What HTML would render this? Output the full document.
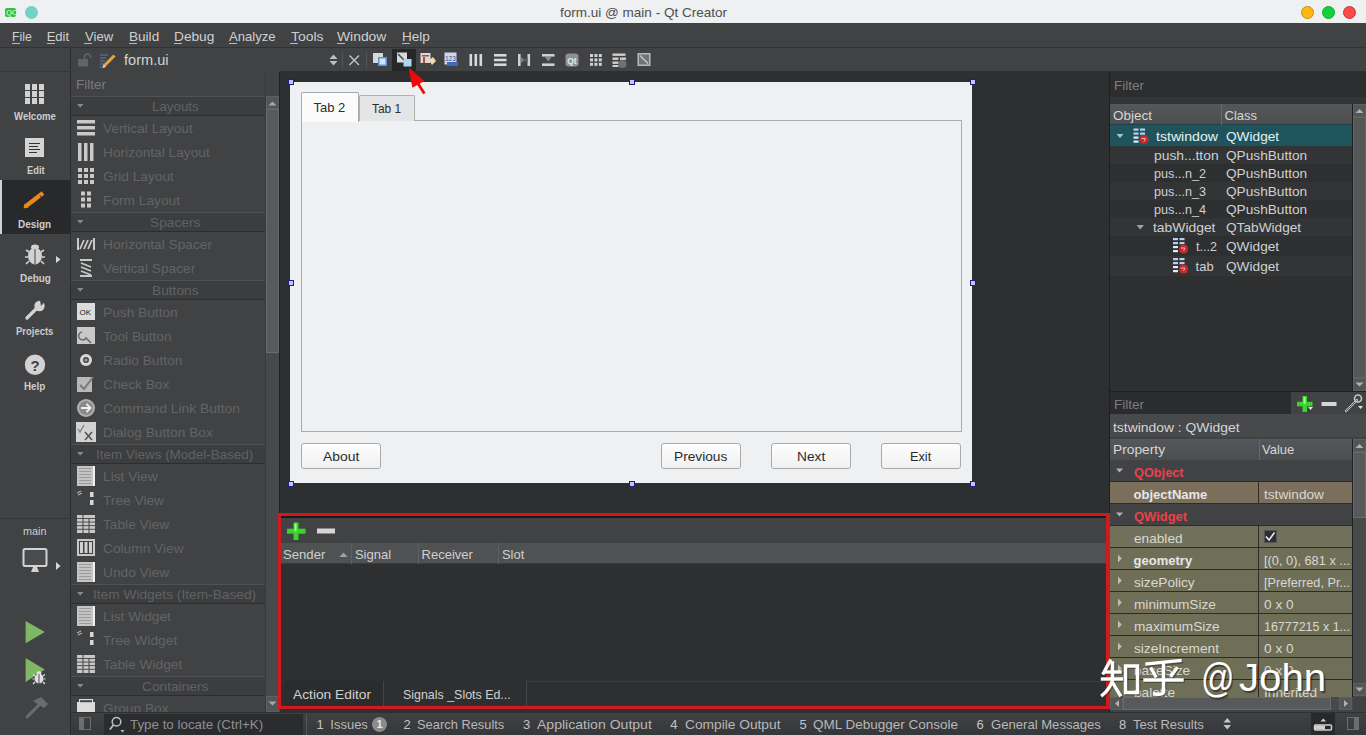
<!DOCTYPE html>
<html><head><meta charset="utf-8">
<style>
*{margin:0;padding:0;box-sizing:border-box}
html,body{width:1366px;height:735px;overflow:hidden;background:#404244;font-family:"Liberation Sans",sans-serif;position:relative}
.a{position:absolute}
.t{position:absolute;white-space:nowrap}
svg{position:absolute;overflow:visible}
</style></head><body>

<div class="a" style="left:0px;top:0px;width:1366px;height:23px;background:#eff0f1;"></div>
<div class="t" style="left:560.00px;top:6px;font-size:13px;line-height:13px;color:#4c4e50;transform:scaleX(1.0402);transform-origin:0 0;">form.ui @ main - Qt Creator</div>
<div class="a" style="left:5px;top:8px;width:11px;height:9px;background:#3fb83f;border-radius:2px"></div>
<div class="t" style="left:6px;top:8px;font-size:8px;line-height:9px;color:#9dff9d;font-weight:bold;letter-spacing:-0.5px">QC</div>
<div class="a" style="left:25px;top:6px;width:13px;height:13px;background:#6fd3c8;border-radius:50%"></div>
<div class="a" style="left:1301.0px;top:5.5px;width:13px;height:13px;background:#fdb813;border-radius:50%;border:1px solid #c98e0c"></div>
<div class="a" style="left:1322.0px;top:5.5px;width:13px;height:13px;background:#13d13a;border-radius:50%;border:1px solid #10a82e"></div>
<div class="a" style="left:1343.0px;top:5.5px;width:13px;height:13px;background:#fc4a4a;border-radius:50%;border:1px solid #c23434"></div>
<div class="a" style="left:0px;top:23px;width:1366px;height:24px;background:#404244;"></div>
<div class="a" style="left:0px;top:47px;width:1366px;height:1px;background:#313233;"></div>
<div class="t" style="left:11.60px;top:30px;font-size:13px;line-height:13px;color:#d0d0d0;transform:scaleX(0.9460);transform-origin:0 0;">File</div>
<div class="a" style="left:12px;top:43px;width:8px;height:1px;background:#b8b8b8;"></div>
<div class="t" style="left:46.70px;top:30px;font-size:13px;line-height:13px;color:#d0d0d0;">Edit</div>
<div class="a" style="left:47px;top:43px;width:8px;height:1px;background:#b8b8b8;"></div>
<div class="t" style="left:84.50px;top:30px;font-size:13px;line-height:13px;color:#d0d0d0;transform:scaleX(1.0089);transform-origin:0 0;">View</div>
<div class="a" style="left:84px;top:43px;width:8px;height:1px;background:#b8b8b8;"></div>
<div class="t" style="left:128.80px;top:30px;font-size:13px;line-height:13px;color:#d0d0d0;transform:scaleX(1.0441);transform-origin:0 0;">Build</div>
<div class="a" style="left:129px;top:43px;width:8px;height:1px;background:#b8b8b8;"></div>
<div class="t" style="left:174.40px;top:30px;font-size:13px;line-height:13px;color:#d0d0d0;transform:scaleX(1.0526);transform-origin:0 0;">Debug</div>
<div class="a" style="left:174px;top:43px;width:8px;height:1px;background:#b8b8b8;"></div>
<div class="t" style="left:229.40px;top:30px;font-size:13px;line-height:13px;color:#d0d0d0;transform:scaleX(1.0069);transform-origin:0 0;">Analyze</div>
<div class="a" style="left:229px;top:43px;width:8px;height:1px;background:#b8b8b8;"></div>
<div class="t" style="left:290.50px;top:30px;font-size:13px;line-height:13px;color:#d0d0d0;transform:scaleX(1.0707);transform-origin:0 0;">Tools</div>
<div class="a" style="left:290px;top:43px;width:8px;height:1px;background:#b8b8b8;"></div>
<div class="t" style="left:337.40px;top:30px;font-size:13px;line-height:13px;color:#d0d0d0;transform:scaleX(1.0674);transform-origin:0 0;">Window</div>
<div class="a" style="left:337px;top:43px;width:8px;height:1px;background:#b8b8b8;"></div>
<div class="t" style="left:402.40px;top:30px;font-size:13px;line-height:13px;color:#d0d0d0;transform:scaleX(1.0406);transform-origin:0 0;">Help</div>
<div class="a" style="left:402px;top:43px;width:8px;height:1px;background:#b8b8b8;"></div>
<div class="a" style="left:0px;top:48px;width:70px;height:687px;background:#404244;"></div>
<div class="a" style="left:70px;top:48px;width:1px;height:687px;background:#2b2c2d;"></div>
<div class="a" style="left:0px;top:71px;width:70px;height:1px;background:#353637;"></div>
<div class="a" style="left:0px;top:518px;width:70px;height:1px;background:#353637;"></div>
<div class="a" style="left:24.7px;top:84px;width:5.5px;height:5.5px;background:#d2d2d2;"></div>
<div class="a" style="left:24.7px;top:91px;width:5.5px;height:5.5px;background:#d2d2d2;"></div>
<div class="a" style="left:24.7px;top:98px;width:5.5px;height:5.5px;background:#d2d2d2;"></div>
<div class="a" style="left:31.7px;top:84px;width:5.5px;height:5.5px;background:#d2d2d2;"></div>
<div class="a" style="left:31.7px;top:91px;width:5.5px;height:5.5px;background:#d2d2d2;"></div>
<div class="a" style="left:31.7px;top:98px;width:5.5px;height:5.5px;background:#d2d2d2;"></div>
<div class="a" style="left:38.7px;top:84px;width:5.5px;height:5.5px;background:#d2d2d2;"></div>
<div class="a" style="left:38.7px;top:91px;width:5.5px;height:5.5px;background:#d2d2d2;"></div>
<div class="a" style="left:38.7px;top:98px;width:5.5px;height:5.5px;background:#d2d2d2;"></div>
<div class="t" style="left:14.20px;top:111px;font-size:11px;line-height:11px;color:#cdcdcd;font-weight:bold;transform:scaleX(0.8716);transform-origin:0 0;">Welcome</div>
<div class="a" style="left:25px;top:138px;width:19px;height:19px;background:#d4d4d4;"></div>
<div class="a" style="left:29px;top:142.5px;width:11px;height:1.3px;background:#333;"></div>
<div class="a" style="left:29px;top:145.5px;width:9px;height:1.3px;background:#333;"></div>
<div class="a" style="left:29px;top:148.5px;width:11px;height:1.3px;background:#333;"></div>
<div class="a" style="left:29px;top:151.5px;width:8px;height:1.3px;background:#333;"></div>
<div class="t" style="left:26.60px;top:164.6px;font-size:11px;line-height:11px;color:#cdcdcd;font-weight:bold;transform:scaleX(0.8466);transform-origin:0 0;">Edit</div>
<div class="a" style="left:2px;top:180px;width:68px;height:54px;background:#27292a;"></div>
<div class="a" style="left:0px;top:180px;width:2px;height:54px;background:#d0d0d0;"></div>
<svg style="left:0;top:0" width="70" height="240"><line x1="26" y1="206" x2="43" y2="193" stroke="#e88a1c" stroke-width="4.2" stroke-linecap="butt"/><polygon points="23.5,208.5 24.5,203.5 28.5,207.5" fill="#e88a1c"/><line x1="40" y1="195.5" x2="42" y2="198" stroke="#27292a" stroke-width="1"/></svg>
<div class="t" style="left:18.30px;top:218.6px;font-size:11px;line-height:11px;color:#cdcdcd;font-weight:bold;transform:scaleX(0.9023);transform-origin:0 0;">Design</div>
<svg style="left:0;top:0" width="70" height="400"><ellipse cx="35" cy="256" rx="7" ry="8.5" fill="#d2d2d2"/><ellipse cx="35" cy="247" rx="4" ry="2.5" fill="#d2d2d2"/><line x1="35" y1="249" x2="35" y2="264" stroke="#404244" stroke-width="1"/><path d="M26 250 L29 252 M44 250 L41 252 M25 257 L28 257 M45 257 L42 257 M26 264 L29 261 M44 264 L41 261" stroke="#d2d2d2" stroke-width="1.6"/><polygon points="56,256 60.5,259.5 56,263" fill="#d8d8d8"/><path d="M27 318 L37 308" stroke="#d2d2d2" stroke-width="3.4" stroke-linecap="round"/><circle cx="39.5" cy="306" r="5.2" fill="#d2d2d2"/><path d="M40 300 L46 300 L41 306 Z" fill="#404244"/><circle cx="35" cy="364.8" r="10.2" fill="#d2d2d2"/></svg>
<div class="t" style="left:19.80px;top:272.7px;font-size:11px;line-height:11px;color:#cdcdcd;font-weight:bold;transform:scaleX(0.9032);transform-origin:0 0;">Debug</div>
<div class="t" style="left:16.40px;top:326.4px;font-size:11px;line-height:11px;color:#cdcdcd;font-weight:bold;transform:scaleX(0.8595);transform-origin:0 0;">Projects</div>
<div class="t" style="left:30.50px;top:357.5px;font-size:15px;line-height:15px;color:#404244;font-weight:bold;">?</div>
<div class="t" style="left:24.40px;top:380.5px;font-size:11px;line-height:11px;color:#cdcdcd;font-weight:bold;transform:scaleX(0.8944);transform-origin:0 0;">Help</div>
<div class="t" style="left:23.00px;top:526.2px;font-size:11px;line-height:11px;color:#d0d0d0;transform:scaleX(0.9803);transform-origin:0 0;">main</div>
<svg style="left:0;top:0" width="70" height="735"><rect x="23.5" y="549" width="23" height="17" rx="1.5" fill="#4a4b4d" stroke="#d2d2d2" stroke-width="2"/><polygon points="31,572 39,572 36.5,566 33.5,566" fill="#d2d2d2"/><polygon points="56,562 60.5,566 56,570" fill="#d8d8d8"/><polygon points="25.6,621 44.8,632 25.6,643.2" fill="#80b765"/><polygon points="25.6,658 44.8,669.5 25.6,682" fill="#80b765"/><ellipse cx="39" cy="678.5" rx="4.8" ry="5.3" fill="#e0e0e0" stroke="#404244" stroke-width="0.8"/><ellipse cx="39" cy="672.8" rx="2.6" ry="1.6" fill="#e0e0e0"/><line x1="39" y1="674" x2="39" y2="684" stroke="#404244" stroke-width="0.9"/><path d="M33 674.5 L35 676 M45 674.5 L43 676 M32.5 679 L34.5 679 M45.5 679 L43.5 679 M33 684 L35 682 M45 684 L43 682" stroke="#e0e0e0" stroke-width="1.1"/><path d="M27 717 L40 704" stroke="#6b6c6e" stroke-width="3" stroke-linecap="round"/><path d="M33 701 L41 697 L48 704 L44 708 Z" fill="#6b6c6e"/></svg>
<div class="a" style="left:71px;top:48px;width:1295px;height:24px;background:#404244;"></div>
<div class="a" style="left:279px;top:71px;width:1087px;height:1px;background:#2f3031;"></div>
<svg style="left:0;top:0" width="140" height="72"><rect x="78" y="59" width="10" height="7.5" fill="#626365"/><path d="M84.5 59 L84.5 56 A3.2 3.2 0 0 1 90.5 56 L90.5 58" stroke="#626365" stroke-width="1.6" fill="none"/><path d="M100 55 H108 M100 58 H106 M100 61 H105 M100 64 H104 M100 67 H104" stroke="#5a7fa8" stroke-width="1.2"/><line x1="104" y1="66" x2="114.5" y2="55.5" stroke="#e8a23a" stroke-width="3"/><polygon points="102.5,68 103.5,64.5 106,67" fill="#f2d29a"/></svg>
<div class="t" style="left:124.00px;top:53px;font-size:14px;line-height:14px;color:#d4d4d4;transform:scaleX(1.0428);transform-origin:0 0;">form.ui</div>
<svg style="left:0;top:0" width="700" height="72"><polygon points="329.5,59 333.5,54.5 337.5,59" fill="#bdbdbd"/><polygon points="329.5,61 333.5,65.5 337.5,61" fill="#bdbdbd"/><line x1="342.5" y1="52" x2="342.5" y2="68" stroke="#555759" stroke-width="1"/><path d="M349.5 55.5 L359 65 M359 55.5 L349.5 65" stroke="#c8c8c8" stroke-width="1.3"/><line x1="366.5" y1="52" x2="366.5" y2="68" stroke="#555759" stroke-width="1"/></svg>
<div class="a" style="left:392px;top:49px;width:24px;height:22px;background:#262728;"></div>
<svg style="left:0;top:0" width="700" height="72"><rect x="373" y="53" width="10" height="10" fill="#d8d8d8"/><rect x="378" y="57" width="9" height="9" fill="#5d8fd6"/><rect x="379.5" y="58.5" width="6" height="6" fill="#cfe3ff"/><rect x="397" y="52.5" width="10" height="10" fill="#d8d8d8"/><line x1="398" y1="54" x2="406" y2="62" stroke="#3a4a5a" stroke-width="1.6"/><rect x="403.5" y="59" width="8" height="7.5" fill="#a9d6ef"/><rect x="420.5" y="53" width="10" height="10" fill="#d8d8d8"/><rect x="422" y="55" width="7" height="1.5" fill="#b84a3a"/><polygon points="429,60 433,57 436,61 432,65" fill="#f8d8b0"/><rect x="423" y="57" width="2" height="6" fill="#b84a3a"/><rect x="444.5" y="52.5" width="12" height="12" fill="#d0d8e8"/><text x="445" y="61" font-size="6.5" fill="#3050a0" font-family="Liberation Sans">123</text><rect x="447" y="62" width="11" height="4" fill="#3c6ac0"/><rect x="469.5" y="54" width="2.6" height="12" fill="#d8d8d8"/><rect x="474.5" y="54" width="2.6" height="12" fill="#d8d8d8"/><rect x="479.5" y="54" width="2.6" height="12" fill="#d8d8d8"/><rect x="494" y="54" width="12.5" height="2.6" fill="#d8d8d8"/><rect x="494" y="58.7" width="12.5" height="2.6" fill="#d8d8d8"/><rect x="494" y="63.4" width="12.5" height="2.6" fill="#d8d8d8"/><rect x="518" y="54" width="2.6" height="12" fill="#cfcfcf"/><rect x="527.5" y="54" width="2.6" height="12" fill="#cfcfcf"/><polygon points="521,57 525.5,60 521,63" fill="#7a7a7a"/><polygon points="527.5,57 523,60 527.5,63" fill="#5a5a5a"/><rect x="542" y="54" width="12.5" height="2.6" fill="#cfcfcf"/><rect x="542" y="63.4" width="12.5" height="2.6" fill="#cfcfcf"/><polygon points="545,57 551.5,57 548.2,61.5" fill="#8a8a8a"/><rect x="565.5" y="53.5" width="13" height="13" rx="3" fill="#8f9092"/><text x="567.2" y="63.5" font-size="8.5" fill="#e8e8e8" font-family="Liberation Sans" font-weight="bold">Qt</text><rect x="590.0" y="54.0" width="3" height="3" fill="#d0d0d0"/><rect x="590.0" y="58.4" width="3" height="3" fill="#d0d0d0"/><rect x="590.0" y="62.8" width="3" height="3" fill="#d0d0d0"/><rect x="594.4" y="54.0" width="3" height="3" fill="#d0d0d0"/><rect x="594.4" y="58.4" width="3" height="3" fill="#d0d0d0"/><rect x="594.4" y="62.8" width="3" height="3" fill="#d0d0d0"/><rect x="598.8" y="54.0" width="3" height="3" fill="#d0d0d0"/><rect x="598.8" y="58.4" width="3" height="3" fill="#d0d0d0"/><rect x="598.8" y="62.8" width="3" height="3" fill="#d0d0d0"/><rect x="612.5" y="53.5" width="13" height="2.4" fill="#cfcfcf"/><rect x="612.5" y="57.5" width="6" height="2.4" fill="#cfcfcf"/><rect x="620" y="57.5" width="6" height="2.4" fill="#cfcfcf"/><rect x="612.5" y="61.5" width="6" height="2.4" fill="#cfcfcf"/><rect x="612.5" y="65" width="6" height="2" fill="#cfcfcf"/><circle cx="622.5" cy="64" r="4" fill="#707070"/><rect x="637.5" y="53" width="13" height="13" fill="#b8b8b8"/><rect x="639" y="54.5" width="10" height="10" fill="#707274"/><line x1="640" y1="55.5" x2="648" y2="63.5" stroke="#c8c8c8" stroke-width="1.4"/></svg>
<div class="a" style="left:71px;top:72px;width:195px;height:640px;background:#404244;"></div>
<div class="t" style="left:75.50px;top:78px;font-size:13px;line-height:13px;color:#7a7b7d;transform:scaleX(1.0395);transform-origin:0 0;">Filter</div>
<div class="a" style="left:71px;top:96px;width:194px;height:20px;background:#3c3d3f;"></div>
<div class="a" style="left:71px;top:96px;width:194px;height:1px;background:#505254;"></div>
<div class="a" style="left:71px;top:115px;width:194px;height:1px;background:#2c2d2e;"></div>
<svg style="left:0;top:0" width="100" height="720"><polygon points="77,104 83.5,104 80.2,107.5" fill="#8a8b8d"/></svg>
<div class="t" style="left:151.65px;top:100px;font-size:13px;line-height:13px;color:#616264;transform:scaleX(1.0249);transform-origin:0 0;">Layouts</div>
<div class="t" style="left:103.30px;top:122px;font-size:13px;line-height:13px;color:#636466;transform:scaleX(1.0518);transform-origin:0 0;">Vertical Layout</div>
<div class="t" style="left:103.30px;top:146px;font-size:13px;line-height:13px;color:#636466;transform:scaleX(1.0550);transform-origin:0 0;">Horizontal Layout</div>
<div class="t" style="left:103.30px;top:170px;font-size:13px;line-height:13px;color:#636466;transform:scaleX(1.0550);transform-origin:0 0;">Grid Layout</div>
<div class="t" style="left:103.30px;top:194px;font-size:13px;line-height:13px;color:#636466;transform:scaleX(1.0550);transform-origin:0 0;">Form Layout</div>
<div class="a" style="left:71px;top:212px;width:194px;height:20px;background:#3c3d3f;"></div>
<div class="a" style="left:71px;top:212px;width:194px;height:1px;background:#505254;"></div>
<div class="a" style="left:71px;top:231px;width:194px;height:1px;background:#2c2d2e;"></div>
<svg style="left:0;top:0" width="100" height="720"><polygon points="77,220 83.5,220 80.2,223.5" fill="#8a8b8d"/></svg>
<div class="t" style="left:149.83px;top:216px;font-size:13px;line-height:13px;color:#616264;transform:scaleX(1.0550);transform-origin:0 0;">Spacers</div>
<div class="t" style="left:103.30px;top:238px;font-size:13px;line-height:13px;color:#636466;transform:scaleX(1.0550);transform-origin:0 0;">Horizontal Spacer</div>
<div class="t" style="left:103.30px;top:262px;font-size:13px;line-height:13px;color:#636466;transform:scaleX(1.0550);transform-origin:0 0;">Vertical Spacer</div>
<div class="a" style="left:71px;top:280px;width:194px;height:20px;background:#3c3d3f;"></div>
<div class="a" style="left:71px;top:280px;width:194px;height:1px;background:#505254;"></div>
<div class="a" style="left:71px;top:299px;width:194px;height:1px;background:#2c2d2e;"></div>
<svg style="left:0;top:0" width="100" height="720"><polygon points="77,288 83.5,288 80.2,291.5" fill="#8a8b8d"/></svg>
<div class="t" style="left:151.75px;top:284px;font-size:13px;line-height:13px;color:#616264;transform:scaleX(1.0550);transform-origin:0 0;">Buttons</div>
<div class="t" style="left:103.30px;top:306px;font-size:13px;line-height:13px;color:#636466;transform:scaleX(1.0550);transform-origin:0 0;">Push Button</div>
<div class="t" style="left:103.30px;top:330px;font-size:13px;line-height:13px;color:#636466;transform:scaleX(1.0550);transform-origin:0 0;">Tool Button</div>
<div class="t" style="left:103.30px;top:354px;font-size:13px;line-height:13px;color:#636466;transform:scaleX(1.0550);transform-origin:0 0;">Radio Button</div>
<div class="t" style="left:103.30px;top:378px;font-size:13px;line-height:13px;color:#636466;transform:scaleX(1.0550);transform-origin:0 0;">Check Box</div>
<div class="t" style="left:103.30px;top:402px;font-size:13px;line-height:13px;color:#636466;transform:scaleX(1.0650);transform-origin:0 0;">Command Link Button</div>
<div class="t" style="left:103.30px;top:426px;font-size:13px;line-height:13px;color:#636466;transform:scaleX(1.0550);transform-origin:0 0;">Dialog Button Box</div>
<div class="a" style="left:71px;top:444px;width:194px;height:20px;background:#3c3d3f;"></div>
<div class="a" style="left:71px;top:444px;width:194px;height:1px;background:#505254;"></div>
<div class="a" style="left:71px;top:463px;width:194px;height:1px;background:#2c2d2e;"></div>
<svg style="left:0;top:0" width="100" height="720"><polygon points="77,452 83.5,452 80.2,455.5" fill="#8a8b8d"/></svg>
<div class="t" style="left:96.40px;top:448px;font-size:13px;line-height:13px;color:#616264;transform:scaleX(1.0326);transform-origin:0 0;">Item Views (Model-Based)</div>
<div class="t" style="left:103.30px;top:470px;font-size:13px;line-height:13px;color:#636466;transform:scaleX(1.0550);transform-origin:0 0;">List View</div>
<div class="t" style="left:103.30px;top:494px;font-size:13px;line-height:13px;color:#636466;transform:scaleX(1.0550);transform-origin:0 0;">Tree View</div>
<div class="t" style="left:103.30px;top:518px;font-size:13px;line-height:13px;color:#636466;transform:scaleX(1.0550);transform-origin:0 0;">Table View</div>
<div class="t" style="left:103.30px;top:542px;font-size:13px;line-height:13px;color:#636466;transform:scaleX(1.0550);transform-origin:0 0;">Column View</div>
<div class="t" style="left:103.30px;top:566px;font-size:13px;line-height:13px;color:#636466;transform:scaleX(1.0550);transform-origin:0 0;">Undo View</div>
<div class="a" style="left:71px;top:584px;width:194px;height:20px;background:#3c3d3f;"></div>
<div class="a" style="left:71px;top:584px;width:194px;height:1px;background:#505254;"></div>
<div class="a" style="left:71px;top:603px;width:194px;height:1px;background:#2c2d2e;"></div>
<svg style="left:0;top:0" width="100" height="720"><polygon points="77,592 83.5,592 80.2,595.5" fill="#8a8b8d"/></svg>
<div class="t" style="left:93.46px;top:588px;font-size:13px;line-height:13px;color:#616264;transform:scaleX(1.0550);transform-origin:0 0;">Item Widgets (Item-Based)</div>
<div class="t" style="left:103.30px;top:610px;font-size:13px;line-height:13px;color:#636466;transform:scaleX(1.0550);transform-origin:0 0;">List Widget</div>
<div class="t" style="left:103.30px;top:634px;font-size:13px;line-height:13px;color:#636466;transform:scaleX(1.0550);transform-origin:0 0;">Tree Widget</div>
<div class="t" style="left:103.30px;top:658px;font-size:13px;line-height:13px;color:#636466;transform:scaleX(1.0550);transform-origin:0 0;">Table Widget</div>
<div class="a" style="left:71px;top:676px;width:194px;height:20px;background:#3c3d3f;"></div>
<div class="a" style="left:71px;top:676px;width:194px;height:1px;background:#505254;"></div>
<div class="a" style="left:71px;top:695px;width:194px;height:1px;background:#2c2d2e;"></div>
<svg style="left:0;top:0" width="100" height="720"><polygon points="77,684 83.5,684 80.2,687.5" fill="#8a8b8d"/></svg>
<div class="t" style="left:141.84px;top:680px;font-size:13px;line-height:13px;color:#616264;transform:scaleX(1.0550);transform-origin:0 0;">Containers</div>
<div class="t" style="left:103.30px;top:702px;font-size:13px;line-height:13px;color:#636466;transform:scaleX(1.0550);transform-origin:0 0;">Group Box</div>
<svg style="left:0;top:0" width="280" height="712"><g transform="translate(77,119)"><rect x="0" y="1" width="18" height="3.5" fill="#c9c9c9"/><rect x="0" y="7" width="18" height="3.5" fill="#c9c9c9"/><rect x="0" y="13" width="18" height="3.5" fill="#c9c9c9"/></g><g transform="translate(77,143)"><rect x="1" y="0" width="3.5" height="18" fill="#c9c9c9"/><rect x="7" y="0" width="3.5" height="18" fill="#c9c9c9"/><rect x="13" y="0" width="3.5" height="18" fill="#c9c9c9"/></g><g transform="translate(77,167)"><rect x="1" y="1" width="4" height="4" fill="#c9c9c9"/><rect x="1" y="7" width="4" height="4" fill="#c9c9c9"/><rect x="1" y="13" width="4" height="4" fill="#c9c9c9"/><rect x="7" y="1" width="4" height="4" fill="#c9c9c9"/><rect x="7" y="7" width="4" height="4" fill="#c9c9c9"/><rect x="7" y="13" width="4" height="4" fill="#c9c9c9"/><rect x="13" y="1" width="4" height="4" fill="#c9c9c9"/><rect x="13" y="7" width="4" height="4" fill="#c9c9c9"/><rect x="13" y="13" width="4" height="4" fill="#c9c9c9"/></g><g transform="translate(77,191)"><rect x="4" y="0.5" width="4" height="4" fill="#c9c9c9"/><rect x="4" y="6.5" width="4" height="4" fill="#c9c9c9"/><rect x="4" y="12.5" width="4" height="4" fill="#c9c9c9"/><rect x="10" y="0.5" width="4" height="4" fill="#c9c9c9"/><rect x="10" y="6.5" width="4" height="4" fill="#c9c9c9"/><rect x="10" y="12.5" width="4" height="4" fill="#c9c9c9"/></g><g transform="translate(77,235)"><rect x="0" y="3" width="2" height="12" fill="#c9c9c9"/><rect x="16" y="3" width="2" height="12" fill="#c9c9c9"/><path d="M3 14 L7 5 M7 14 L11 5 M11 14 L15 5" stroke="#c9c9c9" stroke-width="1.8"/></g><g transform="translate(77,259)"><rect x="3" y="0" width="12" height="2" fill="#c9c9c9"/><rect x="3" y="16" width="12" height="2" fill="#c9c9c9"/><path d="M4 4 L14 8 M4 8 L14 12 M4 12 L14 16" stroke="#c9c9c9" stroke-width="1.8"/></g><g transform="translate(77,303)"><rect x="0" y="0" width="18" height="17" fill="#dcdcdc"/><text x="2.5" y="12" font-size="8" fill="#202020" font-family="Liberation Sans">OK</text></g><g transform="translate(77,327)"><rect x="0" y="0" width="18" height="17" fill="#c8c8c8"/><path d="M5 5 A4 4 0 1 0 9 11 L14 16" stroke="#6a6a6a" stroke-width="1.6" fill="none"/></g><g transform="translate(77,351)"><circle cx="9" cy="9" r="6" fill="#d8d8d8"/><circle cx="9" cy="9" r="3" fill="#404244"/><circle cx="9" cy="9" r="1.6" fill="#a0a0a0"/></g><g transform="translate(77,375)"><rect x="0" y="2" width="15" height="15" fill="#b8b8b8"/><path d="M3 10 L7 14 L16 2" stroke="#7a7a7a" stroke-width="2" fill="none"/></g><g transform="translate(77,399)"><circle cx="9" cy="9" r="9" fill="#b0b0b0"/><circle cx="9" cy="9" r="7" fill="#8a8a8a"/><path d="M4 9 H13 M9.5 5 L13.5 9 L9.5 13" stroke="#f0f0f0" stroke-width="1.8" fill="none"/></g><g transform="translate(77,423)"><rect x="-1" y="-1" width="20" height="20" fill="#d2d2d2"/><path d="M1 6 L3 9 L7 2" stroke="#7a7a7a" stroke-width="1.2" fill="none"/><path d="M8 9 L15 17 M15 9 L8 17" stroke="#505050" stroke-width="1.5"/></g><g transform="translate(77,467)"><rect x="0" y="-1" width="16" height="20" fill="#c4c4c4"/><rect x="16" y="-1" width="2" height="20" fill="#f0f0f0"/><rect x="2" y="1" width="12" height="1" fill="#9a9a9a"/><rect x="2" y="4" width="12" height="1" fill="#9a9a9a"/><rect x="2" y="7" width="12" height="1" fill="#9a9a9a"/><rect x="2" y="10" width="12" height="1" fill="#9a9a9a"/><rect x="2" y="13" width="12" height="1" fill="#9a9a9a"/><rect x="2" y="16" width="12" height="1" fill="#9a9a9a"/></g><g transform="translate(77,491)"><path d="M0 2 L4 0 M1 4 L5 2" stroke="#c9c9c9" stroke-width="1"/><rect x="13" y="1" width="3.5" height="5" fill="#d8d8d8"/><rect x="13" y="9" width="3.5" height="5" fill="#d8d8d8"/></g><g transform="translate(77,515)"><rect x="0" y="0" width="18" height="18" fill="#c8c8c8"/><rect x="0" y="3.0" width="18" height="0.9" fill="#404244"/><rect x="0" y="6.6" width="18" height="0.9" fill="#404244"/><rect x="0" y="10.2" width="18" height="0.9" fill="#404244"/><rect x="0" y="13.8" width="18" height="0.9" fill="#404244"/><rect x="5.5" y="0" width="1" height="18" fill="#404244"/><rect x="11.5" y="3" width="1" height="15" fill="#404244"/></g><g transform="translate(77,539)"><rect x="0" y="0" width="18" height="17" fill="#c8c8c8"/><rect x="2" y="2" width="14" height="13" fill="#404244"/><rect x="3" y="3" width="3" height="11" fill="#d0d0d0"/><rect x="7.5" y="3" width="3" height="11" fill="#d0d0d0"/><rect x="12" y="3" width="3" height="11" fill="#d0d0d0"/></g><g transform="translate(77,563)"><rect x="0" y="-1" width="16" height="20" fill="#c4c4c4"/><rect x="16" y="-1" width="2" height="20" fill="#f0f0f0"/><rect x="2" y="1" width="12" height="1" fill="#9a9a9a"/><rect x="2" y="4" width="12" height="1" fill="#9a9a9a"/><rect x="2" y="7" width="12" height="1" fill="#9a9a9a"/><rect x="2" y="10" width="12" height="1" fill="#9a9a9a"/><rect x="2" y="13" width="12" height="1" fill="#9a9a9a"/><rect x="2" y="16" width="12" height="1" fill="#9a9a9a"/></g><g transform="translate(77,607)"><rect x="0" y="-1" width="16" height="20" fill="#c4c4c4"/><rect x="16" y="-1" width="2" height="20" fill="#f0f0f0"/><rect x="2" y="1" width="12" height="1" fill="#9a9a9a"/><rect x="2" y="4" width="12" height="1" fill="#9a9a9a"/><rect x="2" y="7" width="12" height="1" fill="#9a9a9a"/><rect x="2" y="10" width="12" height="1" fill="#9a9a9a"/><rect x="2" y="13" width="12" height="1" fill="#9a9a9a"/><rect x="2" y="16" width="12" height="1" fill="#9a9a9a"/></g><g transform="translate(77,631)"><path d="M0 2 L4 0 M1 4 L5 2" stroke="#c9c9c9" stroke-width="1"/><rect x="13" y="1" width="3.5" height="5" fill="#d8d8d8"/><rect x="13" y="9" width="3.5" height="5" fill="#d8d8d8"/></g><g transform="translate(77,655)"><rect x="0" y="0" width="18" height="18" fill="#c8c8c8"/><rect x="0" y="3.0" width="18" height="0.9" fill="#404244"/><rect x="0" y="6.6" width="18" height="0.9" fill="#404244"/><rect x="0" y="10.2" width="18" height="0.9" fill="#404244"/><rect x="0" y="13.8" width="18" height="0.9" fill="#404244"/><rect x="5.5" y="0" width="1" height="18" fill="#404244"/><rect x="11.5" y="3" width="1" height="15" fill="#404244"/></g><g transform="translate(77,699)"><rect x="0" y="3" width="18" height="12" fill="#dcdcdc"/><rect x="2" y="0" width="14" height="4" fill="#dcdcdc"/><rect x="3" y="1.2" width="12" height="2" fill="#404244"/></g></svg>
<div class="a" style="left:265px;top:72px;width:1px;height:640px;background:#383939;"></div>
<div class="a" style="left:266px;top:96px;width:13px;height:616px;background:#48494b;"></div>
<div class="a" style="left:266px;top:96px;width:13px;height:13px;background:#545557;border:1px solid #5e5f61"></div>
<svg style="left:0;top:0" width="280" height="712"><polygon points="268.5,105.5 272.5,101.5 276.5,105.5" fill="#a8a8a8"/><polygon points="268.5,701.5 272.5,705.5 276.5,701.5" fill="#a8a8a8"/></svg>
<div class="a" style="left:266px;top:109px;width:13px;height:244px;background:#58595b;border:1px solid #6a6b6d"></div>
<div class="a" style="left:266px;top:696px;width:13px;height:16px;background:#545557;border:1px solid #5e5f61"></div>
<svg style="left:0;top:0" width="280" height="712"><polygon points="268.5,701.5 272.5,705.5 276.5,701.5" fill="#a8a8a8"/></svg>
<div class="a" style="left:279px;top:72px;width:1px;height:444px;background:#1e1f20;"></div>
<div class="a" style="left:280px;top:72px;width:830px;height:441px;background:#2e2f30;"></div>
<div class="a" style="left:1109px;top:72px;width:1px;height:640px;background:#1e1f20;"></div>
<div class="a" style="left:290px;top:82px;width:682px;height:401px;background:#eff0f1;"></div>
<div class="a" style="left:301px;top:120px;width:661px;height:312px;background:#eff0f1;border:1px solid #a9aaab"></div>
<div class="a" style="left:358.5px;top:94.5px;width:56px;height:26px;background:#e4e5e6;border:1px solid #b0b1b2;border-bottom:none;border-radius:2px 2px 0 0"></div>
<div class="a" style="left:301px;top:92px;width:58px;height:30px;background:#fbfbfb;border:1px solid #a9aaab;border-bottom:none;border-radius:2px 2px 0 0"></div>
<div class="t" style="left:313.50px;top:100.5px;font-size:13px;line-height:13px;color:#2e2e2e;">Tab 2</div>
<div class="t" style="left:371.70px;top:101.6px;font-size:13px;line-height:13px;color:#2e2e2e;transform:scaleX(0.9155);transform-origin:0 0;">Tab 1</div>
<div class="a" style="left:301px;top:443px;width:80px;height:26px;background:linear-gradient(#fdfdfd,#f1f1f1);border:1px solid #a9aaab;border-radius:3px"></div>
<div class="t" style="left:322.85px;top:450px;font-size:13px;line-height:13px;color:#2b2b2b;transform:scaleX(1.0678);transform-origin:0 0;">About</div>
<div class="a" style="left:661px;top:443px;width:80px;height:26px;background:linear-gradient(#fdfdfd,#f1f1f1);border:1px solid #a9aaab;border-radius:3px"></div>
<div class="t" style="left:674.32px;top:450px;font-size:13px;line-height:13px;color:#2b2b2b;transform:scaleX(1.0550);transform-origin:0 0;">Previous</div>
<div class="a" style="left:771px;top:443px;width:80px;height:26px;background:linear-gradient(#fdfdfd,#f1f1f1);border:1px solid #a9aaab;border-radius:3px"></div>
<div class="t" style="left:796.91px;top:450px;font-size:13px;line-height:13px;color:#2b2b2b;transform:scaleX(1.0550);transform-origin:0 0;">Next</div>
<div class="a" style="left:881px;top:443px;width:80px;height:26px;background:linear-gradient(#fdfdfd,#f1f1f1);border:1px solid #a9aaab;border-radius:3px"></div>
<div class="t" style="left:910.40px;top:450px;font-size:13px;line-height:13px;color:#2b2b2b;transform:scaleX(0.9794);transform-origin:0 0;">Exit</div>
<div class="a" style="left:287.5px;top:79px;width:6px;height:6px;background:#c4c4f2;border:1px solid #1c1c8c"></div>
<div class="a" style="left:287.5px;top:280px;width:6px;height:6px;background:#c4c4f2;border:1px solid #1c1c8c"></div>
<div class="a" style="left:287.5px;top:481px;width:6px;height:6px;background:#c4c4f2;border:1px solid #1c1c8c"></div>
<div class="a" style="left:628.5px;top:79px;width:6px;height:6px;background:#c4c4f2;border:1px solid #1c1c8c"></div>
<div class="a" style="left:628.5px;top:481px;width:6px;height:6px;background:#c4c4f2;border:1px solid #1c1c8c"></div>
<div class="a" style="left:969.5px;top:79px;width:6px;height:6px;background:#c4c4f2;border:1px solid #1c1c8c"></div>
<div class="a" style="left:969.5px;top:280px;width:6px;height:6px;background:#c4c4f2;border:1px solid #1c1c8c"></div>
<div class="a" style="left:969.5px;top:481px;width:6px;height:6px;background:#c4c4f2;border:1px solid #1c1c8c"></div>
<div class="a" style="left:280px;top:516px;width:829px;height:196px;background:#2e2f30;"></div>
<div class="a" style="left:280px;top:516px;width:826px;height:2px;background:#1a1b1c;"></div>
<div class="a" style="left:280px;top:518px;width:826px;height:25px;background:#404244;"></div>
<svg style="left:0;top:0" width="400" height="560"><rect x="293.5" y="522.5" width="5" height="17.5" fill="#39d42c"/><rect x="287" y="528.7" width="18.5" height="5" fill="#39d42c"/><rect x="294.5" y="523.5" width="2" height="8" fill="#a8f59a"/><rect x="317" y="528.5" width="18" height="5" fill="#d6d6d6"/></svg>
<div class="a" style="left:280px;top:543px;width:826px;height:21px;background:#4f5153;"></div>
<div class="a" style="left:280px;top:563px;width:826px;height:1px;background:#3a3b3c;"></div>
<div class="a" style="left:351px;top:543px;width:1px;height:21px;background:#5e6062;"></div>
<div class="a" style="left:417.5px;top:543px;width:1px;height:21px;background:#5e6062;"></div>
<div class="a" style="left:498px;top:543px;width:1px;height:21px;background:#5e6062;"></div>
<div class="t" style="left:282.60px;top:547.5px;font-size:13px;line-height:13px;color:#d0d0d0;transform:scaleX(1.0089);transform-origin:0 0;">Sender</div>
<svg style="left:0;top:0" width="400" height="560"><polygon points="339.5,557 343.5,552.5 347.5,557" fill="#a0a0a0"/></svg>
<div class="t" style="left:354.90px;top:547.5px;font-size:13px;line-height:13px;color:#d0d0d0;">Signal</div>
<div class="t" style="left:421.60px;top:547.5px;font-size:13px;line-height:13px;color:#d0d0d0;">Receiver</div>
<div class="t" style="left:501.90px;top:547.5px;font-size:13px;line-height:13px;color:#d0d0d0;">Slot</div>
<div class="a" style="left:280px;top:681px;width:826px;height:27px;background:#2e2f30;"></div>
<div class="a" style="left:280px;top:681px;width:826px;height:1px;background:#3a3b3c;"></div>
<div class="a" style="left:284px;top:681px;width:100px;height:27px;background:#2b2c2d;border-right:1px solid #444546"></div>
<div class="a" style="left:385px;top:681px;width:142px;height:27px;background:#2e2f30;border-right:1px solid #444546"></div>
<div class="t" style="left:292.80px;top:688px;font-size:13px;line-height:13px;color:#d0d0d0;transform:scaleX(1.0582);transform-origin:0 0;">Action Editor</div>
<div class="t" style="left:402.50px;top:688px;font-size:13px;line-height:13px;color:#d0d0d0;transform:scaleX(0.9555);transform-origin:0 0;">Signals _Slots Ed...</div>
<div class="a" style="left:277.5px;top:513px;width:832px;height:3px;background:#d21a1d;"></div>
<div class="a" style="left:277.5px;top:513px;width:3px;height:196px;background:#d21a1d;"></div>
<div class="a" style="left:1106px;top:513px;width:3.5px;height:196px;background:#d21a1d;"></div>
<div class="a" style="left:277.5px;top:705.5px;width:832px;height:3px;background:#d21a1d;"></div>
<div class="a" style="left:1110px;top:72px;width:256px;height:319px;background:#404244;"></div>
<div class="a" style="left:1110px;top:72px;width:256px;height:25px;background:#2c2d2f;"></div>
<div class="a" style="left:1110px;top:97px;width:256px;height:7px;background:#343537;"></div>
<div class="t" style="left:1114.00px;top:79px;font-size:13px;line-height:13px;color:#7c7d7f;transform:scaleX(1.0395);transform-origin:0 0;">Filter</div>
<div class="a" style="left:1110px;top:104px;width:243px;height:287px;background:#2e2f30;"></div>
<div class="a" style="left:1110px;top:104px;width:243px;height:21px;background:linear-gradient(#55575a,#4b4d4f);"></div>
<div class="a" style="left:1110px;top:124px;width:243px;height:1px;background:#1e3f45;"></div>
<div class="a" style="left:1220.5px;top:104px;width:1px;height:21px;background:#65676a;"></div>
<div class="t" style="left:1112.70px;top:109.1px;font-size:13px;line-height:13px;color:#d6d6d6;transform:scaleX(1.0354);transform-origin:0 0;">Object</div>
<div class="t" style="left:1224.50px;top:109.1px;font-size:13px;line-height:13px;color:#d6d6d6;">Class</div>
<div class="a" style="left:1110px;top:125px;width:243px;height:21px;background:#1f545d;"></div>
<div class="a" style="left:1110px;top:146px;width:243px;height:18px;background:#333436;"></div>
<div class="a" style="left:1110px;top:164px;width:243px;height:18px;background:#2e2f30;"></div>
<div class="a" style="left:1110px;top:182px;width:243px;height:18px;background:#333436;"></div>
<div class="a" style="left:1110px;top:200px;width:243px;height:18px;background:#2e2f30;"></div>
<div class="a" style="left:1110px;top:218px;width:243px;height:18px;background:#333436;"></div>
<div class="a" style="left:1110px;top:236px;width:243px;height:20px;background:#2e2f30;"></div>
<div class="a" style="left:1110px;top:256px;width:243px;height:20px;background:#333436;"></div>
<svg style="left:0;top:0" width="1366" height="400"><polygon points="1116.5,134 1123.5,134 1120,138" fill="#a9c9cf"/><g transform="translate(1133.5,128.5)"><rect x="0" y="0" width="5" height="2.2" fill="#b8d0ea"/><rect x="6.5" y="0" width="5" height="2.2" fill="#b8d0ea"/><rect x="0" y="4" width="5" height="2.2" fill="#b8d0ea"/><rect x="6.5" y="4" width="5" height="2.2" fill="#b8d0ea"/><rect x="0" y="8" width="5" height="2.2" fill="#e0ecf8"/><rect x="0" y="12" width="5" height="2.2" fill="#e0ecf8"/><circle cx="10.5" cy="11" r="4.6" fill="#c82a2a"/><path d="M8 10 L12 10 L10.5 13" stroke="#f3b0b0" stroke-width="1" fill="none"/></g><polygon points="1136.5,225 1144,225 1140.2,229.4" fill="#a0a0a0"/><g transform="translate(1173,238)"><rect x="0" y="0" width="5" height="2.2" fill="#b8d0ea"/><rect x="6.5" y="0" width="5" height="2.2" fill="#b8d0ea"/><rect x="0" y="4" width="5" height="2.2" fill="#b8d0ea"/><rect x="6.5" y="4" width="5" height="2.2" fill="#b8d0ea"/><rect x="0" y="8" width="5" height="2.2" fill="#e0ecf8"/><rect x="0" y="12" width="5" height="2.2" fill="#e0ecf8"/><circle cx="10.5" cy="11" r="4.6" fill="#c82a2a"/><path d="M8 10 L12 10 L10.5 13" stroke="#f3b0b0" stroke-width="1" fill="none"/></g><g transform="translate(1173,258)"><rect x="0" y="0" width="5" height="2.2" fill="#b8d0ea"/><rect x="6.5" y="0" width="5" height="2.2" fill="#b8d0ea"/><rect x="0" y="4" width="5" height="2.2" fill="#b8d0ea"/><rect x="6.5" y="4" width="5" height="2.2" fill="#b8d0ea"/><rect x="0" y="8" width="5" height="2.2" fill="#e0ecf8"/><rect x="0" y="12" width="5" height="2.2" fill="#e0ecf8"/><circle cx="10.5" cy="11" r="4.6" fill="#c82a2a"/><path d="M8 10 L12 10 L10.5 13" stroke="#f3b0b0" stroke-width="1" fill="none"/></g></svg>
<div class="t" style="left:1155.70px;top:129.6px;font-size:13px;line-height:13px;color:#e6f2f2;transform:scaleX(1.0851);transform-origin:0 0;">tstwindow</div>
<div class="t" style="left:1225.60px;top:129.6px;font-size:13px;line-height:13px;color:#e6f2f2;transform:scaleX(1.0500);transform-origin:0 0;">QWidget</div>
<div class="t" style="left:1153.70px;top:149.3px;font-size:13px;line-height:13px;color:#d0d0d0;transform:scaleX(1.0641);transform-origin:0 0;">push...tton</div>
<div class="t" style="left:1225.60px;top:149.3px;font-size:13px;line-height:13px;color:#d0d0d0;transform:scaleX(1.0500);transform-origin:0 0;">QPushButton</div>
<div class="t" style="left:1153.70px;top:167.3px;font-size:13px;line-height:13px;color:#d0d0d0;transform:scaleX(0.9721);transform-origin:0 0;">pus...n_2</div>
<div class="t" style="left:1225.60px;top:167.3px;font-size:13px;line-height:13px;color:#d0d0d0;transform:scaleX(1.0500);transform-origin:0 0;">QPushButton</div>
<div class="t" style="left:1153.70px;top:185.3px;font-size:13px;line-height:13px;color:#d0d0d0;transform:scaleX(0.9721);transform-origin:0 0;">pus...n_3</div>
<div class="t" style="left:1225.60px;top:185.3px;font-size:13px;line-height:13px;color:#d0d0d0;transform:scaleX(1.0500);transform-origin:0 0;">QPushButton</div>
<div class="t" style="left:1153.70px;top:203px;font-size:13px;line-height:13px;color:#d0d0d0;transform:scaleX(0.9721);transform-origin:0 0;">pus...n_4</div>
<div class="t" style="left:1225.60px;top:203px;font-size:13px;line-height:13px;color:#d0d0d0;transform:scaleX(1.0500);transform-origin:0 0;">QPushButton</div>
<div class="t" style="left:1153.40px;top:221.2px;font-size:13px;line-height:13px;color:#d0d0d0;transform:scaleX(1.0672);transform-origin:0 0;">tabWidget</div>
<div class="t" style="left:1225.60px;top:221.2px;font-size:13px;line-height:13px;color:#d0d0d0;transform:scaleX(1.0500);transform-origin:0 0;">QTabWidget</div>
<div class="t" style="left:1195.60px;top:239.8px;font-size:13px;line-height:13px;color:#d0d0d0;transform:scaleX(0.9656);transform-origin:0 0;">t...2</div>
<div class="t" style="left:1225.60px;top:239.8px;font-size:13px;line-height:13px;color:#d0d0d0;transform:scaleX(1.0500);transform-origin:0 0;">QWidget</div>
<div class="t" style="left:1195.60px;top:259.8px;font-size:13px;line-height:13px;color:#d0d0d0;">tab</div>
<div class="t" style="left:1225.60px;top:259.8px;font-size:13px;line-height:13px;color:#d0d0d0;transform:scaleX(1.0500);transform-origin:0 0;">QWidget</div>
<div class="a" style="left:1352px;top:104px;width:1px;height:287px;background:#1e1f20;"></div>
<div class="a" style="left:1353px;top:104px;width:13px;height:287px;background:#48494b;"></div>
<div class="a" style="left:1353px;top:104px;width:13px;height:13px;background:#545557;border:1px solid #5e5f61"></div>
<div class="a" style="left:1353px;top:117px;width:13px;height:261px;background:#555658;border:1px solid #626365"></div>
<div class="a" style="left:1353px;top:378px;width:13px;height:13px;background:#545557;border:1px solid #5e5f61"></div>
<svg style="left:0;top:0" width="1366" height="400"><polygon points="1355.5,113 1359.5,109 1363.5,113" fill="#b0b0b0"/><polygon points="1355.5,382.5 1359.5,386.5 1363.5,382.5" fill="#b0b0b0"/></svg>
<div class="a" style="left:1110px;top:391px;width:256px;height:1px;background:#1e1f20;"></div>
<div class="a" style="left:1110px;top:392px;width:256px;height:320px;background:#404244;"></div>
<div class="a" style="left:1110px;top:392px;width:181px;height:22px;background:#2b2c2e;"></div>
<div class="t" style="left:1114.40px;top:398px;font-size:13px;line-height:13px;color:#7c7d7f;transform:scaleX(1.0395);transform-origin:0 0;">Filter</div>
<svg style="left:0;top:0" width="1366" height="440"><rect x="1302.5" y="396" width="4.5" height="16" fill="#39d42c"/><rect x="1297" y="401.8" width="15.5" height="4.5" fill="#39d42c"/><rect x="1303.5" y="397" width="2" height="7" fill="#a8f59a"/><polygon points="1308,407 1313,407 1310.5,410" fill="#e0e0e0"/><rect x="1321.5" y="402" width="15" height="4" fill="#d6d6d6"/><path d="M1346 411 L1357 400" stroke="#c8c8c8" stroke-width="2.2" stroke-linecap="round"/><path d="M1346 411 L1357 400" stroke="#404244" stroke-width="0.8"/><circle cx="1358" cy="398.5" r="3.5" fill="none" stroke="#c8c8c8" stroke-width="1.6"/><polygon points="1358,406 1363,406 1360.5,409" fill="#e0e0e0"/></svg>
<div class="a" style="left:1110px;top:414px;width:256px;height:23px;background:#48494b;"></div>
<div class="t" style="left:1113.20px;top:420.9px;font-size:13px;line-height:13px;color:#d6d6d6;transform:scaleX(1.0676);transform-origin:0 0;">tstwindow : QWidget</div>
<div class="a" style="left:1110px;top:439px;width:243px;height:21px;background:linear-gradient(#55575a,#4b4d4f);"></div>
<div class="a" style="left:1258.5px;top:439px;width:1px;height:21px;background:#65676a;"></div>
<div class="t" style="left:1112.60px;top:443.1px;font-size:13px;line-height:13px;color:#d6d6d6;transform:scaleX(1.0602);transform-origin:0 0;">Property</div>
<div class="t" style="left:1262.00px;top:443.1px;font-size:13px;line-height:13px;color:#d6d6d6;">Value</div>
<div class="a" style="left:1110px;top:460px;width:243px;height:237px;background:#2c2c2c;"></div>
<div class="a" style="left:1110px;top:460px;width:243px;height:21px;background:#404244;"></div>
<div class="t" style="left:1133.60px;top:465.5px;font-size:13px;line-height:13px;color:#e8424b;font-weight:bold;transform:scaleX(0.9808);transform-origin:0 0;">QObject</div>
<div class="a" style="left:1110px;top:482px;width:148px;height:21px;background:#7b6f5c;"></div>
<div class="a" style="left:1259px;top:482px;width:94px;height:21px;background:#7b6f5c;"></div>
<div class="t" style="left:1133.60px;top:488px;font-size:13px;line-height:13px;color:#e6e6e6;font-weight:bold;">objectName</div>
<div class="t" style="left:1263.60px;top:488px;font-size:13px;line-height:13px;color:#d8d8d0;transform:scaleX(1.0500);transform-origin:0 0;">tstwindow</div>
<div class="a" style="left:1110px;top:504px;width:243px;height:21px;background:#404244;"></div>
<div class="t" style="left:1133.60px;top:509.5px;font-size:13px;line-height:13px;color:#e8424b;font-weight:bold;transform:scaleX(0.9944);transform-origin:0 0;">QWidget</div>
<div class="a" style="left:1110px;top:526px;width:148px;height:21px;background:#71705a;"></div>
<div class="a" style="left:1259px;top:526px;width:94px;height:21px;background:#71705a;"></div>
<div class="t" style="left:1133.60px;top:532px;font-size:13px;line-height:13px;color:#d8d8d0;transform:scaleX(1.0500);transform-origin:0 0;">enabled</div>
<div class="a" style="left:1263.5px;top:530px;width:13px;height:13px;background:#2e2f30;border:1px solid #555"></div>
<div class="a" style="left:1110px;top:548px;width:148px;height:21px;background:#6f6f58;"></div>
<div class="a" style="left:1259px;top:548px;width:94px;height:21px;background:#6f6f58;"></div>
<div class="t" style="left:1133.60px;top:554px;font-size:13px;line-height:13px;color:#e6e6e6;font-weight:bold;">geometry</div>
<div class="t" style="left:1263.60px;top:554px;font-size:13px;line-height:13px;color:#d8d8d0;transform:scaleX(0.9837);transform-origin:0 0;">[(0, 0), 681 x ...</div>
<div class="a" style="left:1110px;top:570px;width:148px;height:21px;background:#6f6f58;"></div>
<div class="a" style="left:1259px;top:570px;width:94px;height:21px;background:#6f6f58;"></div>
<div class="t" style="left:1133.60px;top:576px;font-size:13px;line-height:13px;color:#d8d8d0;transform:scaleX(1.0500);transform-origin:0 0;">sizePolicy</div>
<div class="t" style="left:1263.60px;top:576px;font-size:13px;line-height:13px;color:#d8d8d0;transform:scaleX(0.9757);transform-origin:0 0;">[Preferred, Pr...</div>
<div class="a" style="left:1110px;top:592px;width:148px;height:21px;background:#6f6f58;"></div>
<div class="a" style="left:1259px;top:592px;width:94px;height:21px;background:#6f6f58;"></div>
<div class="t" style="left:1133.60px;top:598px;font-size:13px;line-height:13px;color:#d8d8d0;transform:scaleX(1.0500);transform-origin:0 0;">minimumSize</div>
<div class="t" style="left:1263.60px;top:598px;font-size:13px;line-height:13px;color:#d8d8d0;transform:scaleX(1.0500);transform-origin:0 0;">0 x 0</div>
<div class="a" style="left:1110px;top:614px;width:148px;height:21px;background:#6f6f58;"></div>
<div class="a" style="left:1259px;top:614px;width:94px;height:21px;background:#6f6f58;"></div>
<div class="t" style="left:1133.60px;top:620px;font-size:13px;line-height:13px;color:#d8d8d0;transform:scaleX(1.0500);transform-origin:0 0;">maximumSize</div>
<div class="t" style="left:1263.60px;top:620px;font-size:13px;line-height:13px;color:#d8d8d0;transform:scaleX(0.9594);transform-origin:0 0;">16777215 x 1...</div>
<div class="a" style="left:1110px;top:636px;width:148px;height:21px;background:#6f6f58;"></div>
<div class="a" style="left:1259px;top:636px;width:94px;height:21px;background:#6f6f58;"></div>
<div class="t" style="left:1133.60px;top:642px;font-size:13px;line-height:13px;color:#d8d8d0;transform:scaleX(1.0500);transform-origin:0 0;">sizeIncrement</div>
<div class="t" style="left:1263.60px;top:642px;font-size:13px;line-height:13px;color:#d8d8d0;transform:scaleX(1.0500);transform-origin:0 0;">0 x 0</div>
<div class="a" style="left:1110px;top:658px;width:148px;height:21px;background:#6f6f58;"></div>
<div class="a" style="left:1259px;top:658px;width:94px;height:21px;background:#6f6f58;"></div>
<div class="t" style="left:1133.60px;top:664px;font-size:13px;line-height:13px;color:#d8d8d0;transform:scaleX(1.0500);transform-origin:0 0;">baseSize</div>
<div class="t" style="left:1263.60px;top:664px;font-size:13px;line-height:13px;color:#d8d8d0;transform:scaleX(1.0500);transform-origin:0 0;">0 x 0</div>
<div class="a" style="left:1110px;top:680px;width:148px;height:21px;background:#6f6f58;"></div>
<div class="a" style="left:1259px;top:680px;width:94px;height:21px;background:#6f6f58;"></div>
<div class="t" style="left:1133.60px;top:686px;font-size:13px;line-height:13px;color:#d8d8d0;transform:scaleX(1.0500);transform-origin:0 0;">palette</div>
<div class="t" style="left:1263.60px;top:686px;font-size:13px;line-height:13px;color:#d8d8d0;transform:scaleX(1.0500);transform-origin:0 0;">Inherited</div>
<svg style="left:0;top:0" width="1366" height="712"><polygon points="1116,468.5 1123,468.5 1119.5,472.5" fill="#b0b0b0"/><polygon points="1116,512.5 1123,512.5 1119.5,516.5" fill="#b0b0b0"/><path d="M1266 536.5 L1269 540 L1274.5 532.5" stroke="#f0f0f0" stroke-width="1.5" fill="none"/><polygon points="1118,554.5 1121.8,558.5 1118,562.5" fill="#bdbdb0"/><polygon points="1118,576.5 1121.8,580.5 1118,584.5" fill="#bdbdb0"/><polygon points="1118,598.5 1121.8,602.5 1118,606.5" fill="#bdbdb0"/><polygon points="1118,620.5 1121.8,624.5 1118,628.5" fill="#bdbdb0"/><polygon points="1118,642.5 1121.8,646.5 1118,650.5" fill="#bdbdb0"/><polygon points="1118,664.5 1121.8,668.5 1118,672.5" fill="#bdbdb0"/></svg>
<div class="a" style="left:1352px;top:439px;width:1px;height:258px;background:#1e1f20;"></div>
<div class="a" style="left:1353px;top:439px;width:13px;height:258px;background:#48494b;"></div>
<div class="a" style="left:1353px;top:439px;width:13px;height:13px;background:#545557;border:1px solid #5e5f61"></div>
<div class="a" style="left:1353px;top:452px;width:13px;height:66px;background:#58595b;border:1px solid #6a6b6d"></div>
<div class="a" style="left:1353px;top:683px;width:13px;height:13px;background:#545557;border:1px solid #5e5f61"></div>
<svg style="left:0;top:0" width="1366" height="712"><polygon points="1355.5,448 1359.5,444 1363.5,448" fill="#b0b0b0"/><polygon points="1355.5,687.5 1359.5,691.5 1363.5,687.5" fill="#b0b0b0"/></svg>
<div class="a" style="left:1110px;top:697px;width:256px;height:15px;background:#404244;"></div>
<div class="a" style="left:1110px;top:697px;width:243px;height:13px;background:#48494b;"></div>
<div class="a" style="left:1110px;top:697px;width:13px;height:13px;background:#545557;border:1px solid #5e5f61"></div>
<div class="a" style="left:1123px;top:697px;width:208px;height:13px;background:#58595b;border:1px solid #6a6b6d"></div>
<div class="a" style="left:1339px;top:697px;width:13px;height:13px;background:#545557;border:1px solid #5e5f61"></div>
<svg style="left:0;top:0" width="1366" height="712"><polygon points="1119,700 1115,703.5 1119,707" fill="#b0b0b0"/><polygon points="1344,700 1348,703.5 1344,707" fill="#b0b0b0"/></svg>
<div class="a" style="left:71px;top:712px;width:1295px;height:23px;background:linear-gradient(#3f4143,#36373a);"></div>
<div class="a" style="left:71px;top:712px;width:1295px;height:1px;background:#2f3031;"></div>
<div class="a" style="left:104px;top:713.5px;width:199px;height:21.5px;background:#2b2c2d;"></div>
<div class="a" style="left:305.5px;top:714px;width:1px;height:21px;background:#545658;"></div>
<svg style="left:0;top:0" width="1366" height="735"><rect x="79.5" y="717.5" width="11" height="12" fill="none" stroke="#6c6d6f" stroke-width="1"/><rect x="80" y="718" width="4" height="11" fill="#6c6d6f"/><circle cx="116.5" cy="721.8" r="4.3" fill="none" stroke="#c0c0c0" stroke-width="1.5"/><line x1="113.5" y1="725" x2="109.8" y2="729.5" stroke="#c0c0c0" stroke-width="1.8"/><polygon points="120.5,730 124.5,730 122.5,732.5" fill="#c0c0c0"/><polygon points="1223.5,722.5 1227.3,718 1231,722.5" fill="#c6c6c6"/><polygon points="1223.5,725 1227.3,729.5 1231,725" fill="#c6c6c6"/></svg>
<div class="t" style="left:130.30px;top:718.3px;font-size:13px;line-height:13px;color:#8e8f91;transform:scaleX(1.0272);transform-origin:0 0;">Type to locate (Ctrl+K)</div>
<div class="t" style="left:316.50px;top:718px;font-size:13px;line-height:13px;color:#c4c4c4;">1</div>
<div class="t" style="left:330.30px;top:718px;font-size:13px;line-height:13px;color:#b8b8b8;">Issues</div>
<div class="t" style="left:403.50px;top:718px;font-size:13px;line-height:13px;color:#c4c4c4;">2</div>
<div class="t" style="left:417.30px;top:718px;font-size:13px;line-height:13px;color:#b8b8b8;transform:scaleX(0.9905);transform-origin:0 0;">Search Results</div>
<div class="t" style="left:523.00px;top:718px;font-size:13px;line-height:13px;color:#c4c4c4;">3</div>
<div class="t" style="left:537.40px;top:718px;font-size:13px;line-height:13px;color:#b8b8b8;transform:scaleX(1.0809);transform-origin:0 0;">Application Output</div>
<div class="t" style="left:670.30px;top:718px;font-size:13px;line-height:13px;color:#c4c4c4;">4</div>
<div class="t" style="left:684.80px;top:718px;font-size:13px;line-height:13px;color:#b8b8b8;transform:scaleX(1.0570);transform-origin:0 0;">Compile Output</div>
<div class="t" style="left:799.60px;top:718px;font-size:13px;line-height:13px;color:#c4c4c4;">5</div>
<div class="t" style="left:813.30px;top:718px;font-size:13px;line-height:13px;color:#b8b8b8;transform:scaleX(1.0380);transform-origin:0 0;">QML Debugger Console</div>
<div class="t" style="left:976.40px;top:718px;font-size:13px;line-height:13px;color:#c4c4c4;">6</div>
<div class="t" style="left:990.90px;top:718px;font-size:13px;line-height:13px;color:#b8b8b8;transform:scaleX(1.0070);transform-origin:0 0;">General Messages</div>
<div class="t" style="left:1118.90px;top:718px;font-size:13px;line-height:13px;color:#c4c4c4;">8</div>
<div class="t" style="left:1133.00px;top:718px;font-size:13px;line-height:13px;color:#b8b8b8;">Test Results</div>
<div class="a" style="left:371.8px;top:716.5px;width:15px;height:15px;background:#8a8b8d;border-radius:7.5px"></div>
<div class="t" style="left:376.50px;top:719.3px;font-size:11px;line-height:11px;color:#e8e8e8;font-weight:bold;">1</div>
<div class="a" style="left:1311px;top:713px;width:24px;height:22px;background:#27292a;"></div>
<svg style="left:0;top:0" width="1366" height="735"><rect x="1314.5" y="725" width="17" height="5" rx="1" fill="none" stroke="#d0d0d0" stroke-width="1.5"/><rect x="1315" y="725.5" width="10" height="4" fill="#d0d0d0"/><polygon points="1320.5,721.5 1323.3,718.5 1326,721.5" fill="#d0d0d0"/><rect x="1347.5" y="717.5" width="11" height="12" fill="none" stroke="#6c6d6f" stroke-width="1"/><rect x="1354" y="718" width="4" height="11" fill="#6c6d6f"/></svg>
<svg style="left:0;top:0" width="1366" height="735"><line x1="424.4" y1="93.5" x2="415" y2="79" stroke="#ee0a0a" stroke-width="2.8"/><polygon points="408.7,67.5 412.4,87.7 424.4,80.9" fill="#ee0a0a"/></svg>
<svg style="left:0;top:0" width="1366" height="735"><g transform="translate(1.2,1.4)" stroke="#303030" fill="#303030" opacity="0.55"><g stroke="#303030" stroke-linecap="square" fill="none" stroke-width="3.4"><path d="M1110 661 L1103.5 673"/><path d="M1106 672 H1120"/><path d="M1102.5 679 H1121.5"/><path d="M1112.5 663 V680 Q1110 689 1102.5 695"/><path d="M1113.5 684 L1120 695"/><path d="M1125.5 666 H1137.5 V692.5 H1125.5 Z"/><path d="M1147 664 L1180 660.5"/><path d="M1151.5 669 L1155.5 676"/><path d="M1176.5 668.5 L1171.5 675.5"/><path d="M1145 680 H1182"/><path d="M1163.5 665 V692 Q1163 695 1155 694"/></g></g><g stroke="#ffffff"><g stroke-linecap="square" fill="none" stroke-width="3.4"><path d="M1110 661 L1103.5 673"/><path d="M1106 672 H1120"/><path d="M1102.5 679 H1121.5"/><path d="M1112.5 663 V680 Q1110 689 1102.5 695"/><path d="M1113.5 684 L1120 695"/><path d="M1125.5 666 H1137.5 V692.5 H1125.5 Z"/><path d="M1147 664 L1180 660.5"/><path d="M1151.5 669 L1155.5 676"/><path d="M1176.5 668.5 L1171.5 675.5"/><path d="M1145 680 H1182"/><path d="M1163.5 665 V692 Q1163 695 1155 694"/></g></g></svg>
<div class="t" style="left:1201.00px;top:658px;font-size:40px;line-height:40px;color:#ffffff;transform:scaleX(0.8251);transform-origin:0 0;text-shadow:1.5px 1.5px 1px rgba(30,30,30,0.6);">@</div>
<div class="t" style="left:1239.40px;top:657.6px;font-size:39px;line-height:39px;color:#ffffff;transform:scaleX(1.0315);transform-origin:0 0;text-shadow:1.5px 1.5px 1px rgba(30,30,30,0.6);">John</div>
</body></html>
